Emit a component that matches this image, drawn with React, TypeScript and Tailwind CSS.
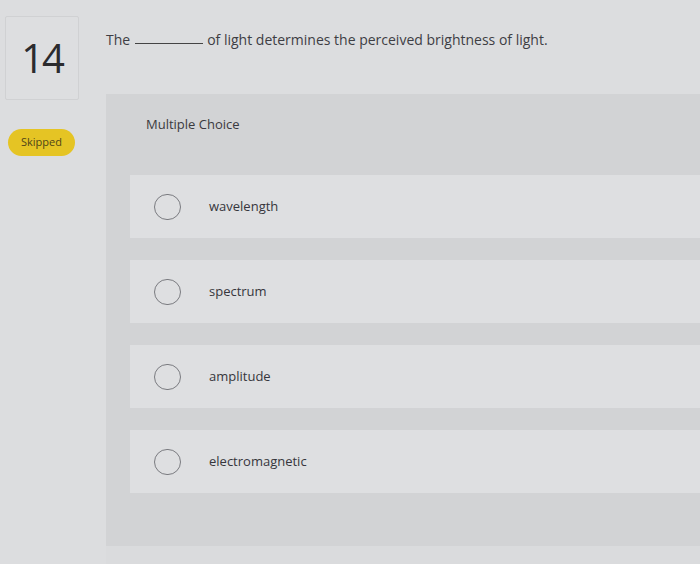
import React from "react";

const options = ["wavelength", "spectrum", "amplitude", "electromagnetic"];

function Radio() {
  return (
    <div className="w-[27px] h-[26px] rounded-full border-[1.5px] border-[#7a7b80] shrink-0" />
  );
}

export default function App() {
  return (
    <div
      className="w-[700px] h-[564px] bg-[#dcdddf] overflow-hidden flex text-[#3b3b3f]"
      style={{ fontFamily: '"Open Sans", "Liberation Sans", sans-serif' }}
    >
      <div className="w-[106px] shrink-0 flex flex-col pt-[16px]">
        <div className="ml-[5px] w-[74px] h-[84px] border border-[#d0d1d3] bg-[#dddee0] rounded-[2px] flex items-center justify-center">
          <span className="text-[40px] font-normal leading-none text-[#2b2b2e] tracking-[-2px]">14</span>
        </div>
        <div className="ml-[8px] mt-[29px] w-[67px] h-[27px] rounded-full bg-[#e5c424] flex items-center justify-center text-[11px] text-[#4f4418]">
          Skipped
        </div>
      </div>
      <div className="flex-1 flex flex-col">
        <div className="h-[94px] pt-[29px] text-[14px] text-[#3e3e44] flex items-start">
          <span>The</span>
          <span className="inline-block w-[68px] h-[15px] border-b border-[#444] ml-[5px] mr-[4px]" />
          <span>of light determines the perceived brightness of light.</span>
        </div>
        <div className="h-[452px] bg-[#d2d3d5] flex flex-col">
          <div className="pl-[40px] pt-[21px] h-[81px] text-[13px] text-[#3a3a40]">Multiple Choice</div>
          <div className="flex flex-col gap-[22px] pl-[24px]">
            {options.map((o) => (
              <div key={o} className="h-[63px] bg-[#dedfe1] flex items-center pl-[24px]">
                <Radio />
                <span className="ml-[28px] text-[13px] text-[#36363c]">{o}</span>
              </div>
            ))}
          </div>
        </div>
        <div className="flex-1 bg-[#dadbdd]" />
      </div>
    </div>
  );
}
